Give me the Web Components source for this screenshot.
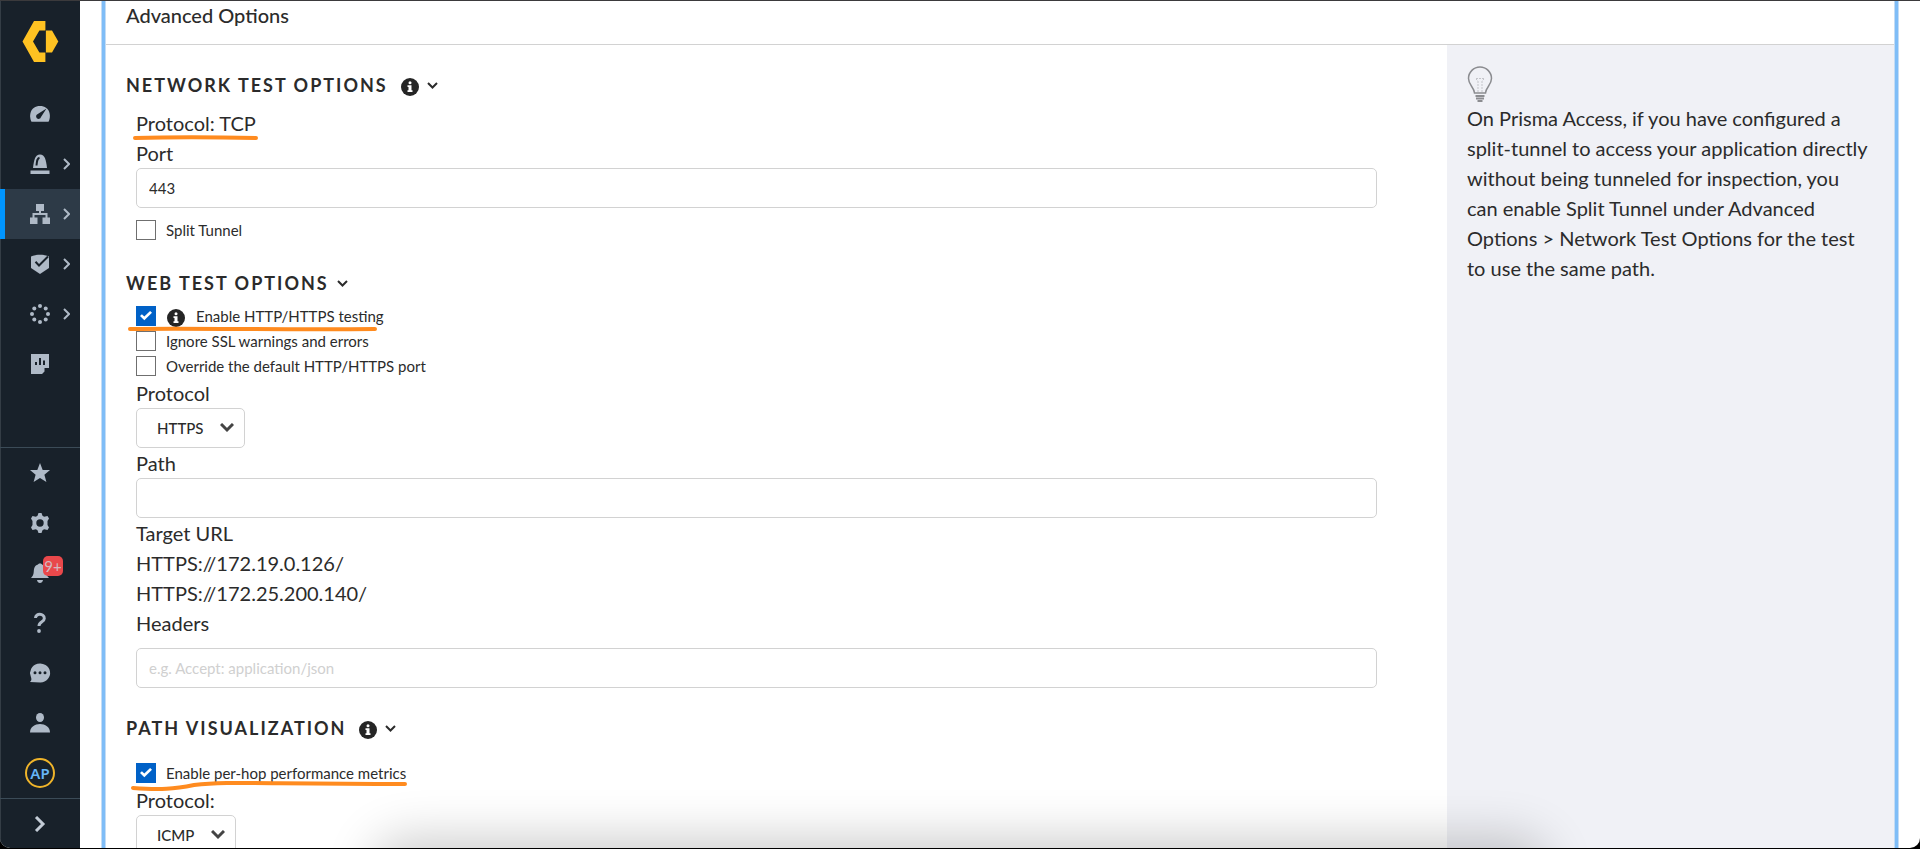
<!DOCTYPE html>
<html lang="en">
<head>
<meta charset="utf-8">
<title>Advanced Options</title>
<style>
  :root {
    --text: #2b2b2b;
    --rail: #18212a;
    --rail-active: #2d3a47;
    --icon: #afbac7;
    --line: #d2d2d2;
    --blue: #0061c7;
    --panel-edge: #7fbdf7;
    --panel-edge-soft: #c3dcf5;
    --mark: #ff8b1f;
  }
  html, body { height: 100%; }
  body {
    margin: 0;
    overflow: hidden;
    background: #fff;
    color: var(--text);
    font: 400 20px/30px Lato, "Liberation Sans", sans-serif;
  }
  check-row + check-row { margin-top: 5px; }
</style>
</head>
<body>

<app-window>
  <side-rail slot="rail">
    <rail-item icon="gauge" label="Dashboard"></rail-item>
    <rail-item icon="alarm" label="Alerts" more></rail-item>
    <rail-item icon="network" label="Network paths" more active></rail-item>
    <rail-item icon="shield" label="Policies" more></rail-item>
    <rail-item icon="dots" label="Experience" more></rail-item>
    <rail-item icon="report" label="Reports"></rail-item>
    <rail-item slot="bottom" icon="star" label="Favorites"></rail-item>
    <rail-item slot="bottom" icon="gear" label="Settings"></rail-item>
    <rail-item slot="bottom" icon="bell" label="Notifications" badge="9+"></rail-item>
    <rail-item slot="bottom" icon="help" label="Help"></rail-item>
    <rail-item slot="bottom" icon="chat" label="Chat"></rail-item>
    <rail-item slot="bottom" icon="person" label="Account"></rail-item>
    <rail-item slot="bottom" avatar="AP" label="Profile"></rail-item>
  </side-rail>

  <options-panel heading="Advanced Options">
    <option-section heading="Network Test Options" info>
      <text-line mark="M-1 30C30 29 80 29 120 30">Protocol: TCP</text-line>
      <text-field label="Port" value="443"></text-field>
      <check-row class="spaced" label="Split Tunnel"></check-row>
    </option-section>

    <option-section class="web" heading="Web Test Options">
      <check-row label="Enable HTTP/HTTPS testing" checked info mark="M-6 23C60 22 150 24 239 23"></check-row>
      <check-row label="Ignore SSL warnings and errors"></check-row>
      <check-row label="Override the default HTTP/HTTPS port"></check-row>
      <select-field label="Protocol" value="HTTPS"></select-field>
      <text-field label="Path"></text-field>
      <text-line>Target URL</text-line>
      <text-line>HTTPS://172.19.0.126/</text-line>
      <text-line>HTTPS://172.25.200.140/</text-line>
      <text-field class="roomy" label="Headers" placeholder="e.g. Accept: application/json"></text-field>
    </option-section>

    <option-section class="path" heading="Path Visualization" info>
      <check-row label="Enable per-hop performance metrics" checked mark="M-3 25C25 27 38 26 58 22C90 18 120 21 269 21"></check-row>
      <select-field label="Protocol:" value="ICMP"></select-field>
    </option-section>

    <hint-box slot="hint">On Prisma Access, if you have configured a split-tunnel to access your application directly without being tunneled for inspection, you can enable Split Tunnel under Advanced Options &gt; Network Test Options for the test to use the same path.</hint-box>
  </options-panel>
</app-window>

<script>
/* Icons on a 20x20 box, "cut" parts take the rail colour */
const icons = {
  gauge: `<path d="M1.500 17.800C-1.500 12 0 2 10 2S21.500 12 18.500 17.800Z"/><path class="cut" d="M16.500 4.500 11 13A2.500 2.500 0 1 1 7.800 10Z"/>`,
  alarm: `<path d="M3 14C4 6 5 .500 10 .500S16 6 17 14Z"/><path d="M.500 16.500h19v3.500H.500z"/><path class="cutline" d="M6.500 11.500C7 7 7 4.500 9.500 3.800"/>`,
  network: `<path d="M6 0h8v7H6zM0 13.500h7.500V20H0zM12.500 13.500H20V20h-7.500z"/><path class="line" d="M10 6v4M3.500 14v-4h13v4"/>`,
  shield: `<path d="M1 2.500C6 0 14 0 19 2.500V14L10 20 1 14Z"/><path class="cutline" d="M5.500 7.800 9 11.500 18 2.500"/>`,
  dots: `<circle cx="10" cy="2" r="2"/><circle cx="15.700" cy="4.500" r="2"/><circle cx="18" cy="10" r="2"/><circle cx="15.700" cy="15.500" r="2"/><circle cx="10" cy="18" r="2"/><circle cx="4.300" cy="15.500" r="2"/><circle cx="2" cy="10" r="2"/><circle cx="4.300" cy="4.500" r="2"/>`,
  report: `<path d="M1 0h18v14h-4.500v3.500L12 20H1z"/><path class="cut" d="M5 8h2v3H5zM9 4h2v7H9zM13 6.500h2V11h-2z"/>`,
  star: `<path d="m10 0 2.700 7H20l-5.600 4.700L16.400 19 10 15 3.600 19l2-7.300L0 7h7.300z"/>`,
  gear: `<path fill-rule="evenodd" d="M8.500 0h3l1 2.800 1.600.900L17.500 3 19 5.600 17.500 8v4l1.500 2.400-1.500 2.600-3.400-.700-1.600.900-1 2.800h-3l-1-2.800-1.600-.900-3.400.700L1 14.400 2.500 12V8L1 5.600 2.500 3l3.400.700 1.600-.900zM10 6.300a3.700 3.700 0 1 0 0 7.400 3.700 3.700 0 0 0 0-7.400z"/>`,
  bell: `<path d="M1 15C5 11 3 8 4.500 4.500 6 1.500 8 2 9 .500h2c1 1.500 3 1 4.500 4C17 8 15 11 19 15ZM7 17h6c-.500 4-5.500 4-6 0z"/>`,
  help: `<path class="line round" d="M5.500 5C5.500 0 14.300 0 14.300 5.400 14.300 9 9 8.500 9 13"/><circle cx="9" cy="18" r="1.900"/>`,
  chat: `<path d="M0 19C2 17 1.500 16 .800 13.500A10 9.500 0 1 1 10.500 19.500Z"/><path class="cutline round" d="M5 9.800h.01M10 9.800h.01M15 9.800h.01"/>`,
  person: `<ellipse cx="10" cy="4.500" rx="4" ry="4.500"/><path d="M0 19.500C0 8 20 8 20 19.500Z"/>`
};

const infoIcon = `<svg class="info" viewBox="0 0 18 18" width="18" height="18" aria-hidden="true">
  <circle cx="9" cy="9" r="9" fill="#252525"/>
  <circle cx="9" cy="4.700" r="1.500" fill="#fff"/>
  <path d="M6.500 7.300h4v5h1v1.600h-5v-1.600h1V9h-1z" fill="#fff"/>
</svg>`;

/* Hand drawn marker stroke under a row */
const markLine = (d) => d ? `<svg class="mark" width="1" height="1" aria-hidden="true"><path d="${d}"/></svg>` : "";
const markStyle = `
  .mark {
    position: absolute;
    left: 0;
    top: 0;
    overflow: visible;
    fill: none;
    stroke: var(--mark);
    stroke-width: 4px;
    stroke-linecap: round;
    pointer-events: none;
  }
`;

class BaseElement extends HTMLElement {
  constructor() {
    super();
    this.attachShadow({ mode: "open" });
  }

  connectedCallback() {
    this.shadowRoot.innerHTML = `<style>* { box-sizing: border-box; }${this.styles()}</style>${this.markup()}`;
  }

  attr(name) {
    return this.getAttribute(name) || "";
  }
}

class AppWindow extends BaseElement {
  styles() {
    return `
      :host { display: block; height: 100vh; background: #000; }
      .frame {
        position: relative;
        display: flex;
        height: calc(100vh - 1px);
        overflow: hidden;
        background: #fff;
        border-top: 1px solid #3b3a3c;
        border-radius: 0 0 10px 10px;
      }
      /* shade cast by the dock below the window */
      .shade {
        position: absolute;
        left: 20%;
        right: 20%;
        top: 100%;
        height: 60px;
        border-radius: 20px;
        box-shadow: 0 0 50px 10px rgba(0, 0, 0, .2);
        pointer-events: none;
      }
    `;
  }
  markup() {
    return `<div class="frame"><slot name="rail"></slot><slot></slot><div class="shade"></div></div>`;
  }
}

class SideRail extends BaseElement {
  styles() {
    return `
      :host {
        display: flex;
        flex: none;
        flex-direction: column;
        width: 80px;
        background: var(--rail);
        box-shadow: inset 1px 0 0 #343d45;
      }
      .logo { display: block; height: 88px; padding: 20px 0 0 22px; }
      nav { display: flex; flex-direction: column; }
      .bottom { margin-top: auto; border-top: 1px solid #3b4b57; }
      .expand {
        display: flex;
        align-items: center;
        justify-content: center;
        height: 50px;
        padding: 0;
        background: none;
        border: 0;
        border-top: 1px solid #3b4b57;
        cursor: pointer;
      }
    `;
  }
  markup() {
    return `
      <a class="logo" href="#" aria-label="Home">
        <svg width="37" height="41" viewBox="0 0 37 41" fill="#ffc222">
          <path d="M12 0h11.400v9.500h-6L11 20.500l6.400 11h6V41H12L.500 20.500z"/>
          <path d="M23.900 9.500H30l6.300 11-6.300 11h-6.100z"/>
        </svg>
      </a>
      <nav><slot></slot></nav>
      <nav class="bottom"><slot name="bottom"></slot></nav>
      <button class="expand" aria-label="Expand menu">
        <svg width="12" height="16" viewBox="0 0 12 16" fill="none" stroke="#c3ccd6" stroke-width="3"><path d="m2 1 7 7-7 7"/></svg>
      </button>
    `;
  }
}

class RailItem extends BaseElement {
  styles() {
    return `
      :host { display: block; }
      a {
        position: relative;
        display: flex;
        align-items: center;
        justify-content: center;
        height: 50px;
        text-decoration: none;
      }
      :host([active]) a { background: var(--rail-active); box-shadow: inset 5px 0 0 #0095ff; }
      .icon { fill: var(--icon); overflow: visible; }
      .cut { fill: var(--rail); }
      .line, .cutline { fill: none; stroke: var(--icon); stroke-width: 2px; }
      .line.round { stroke-width: 3px; }
      .cutline { stroke: var(--rail); }
      .cutline.round { stroke-width: 3px; stroke-linecap: round; }
      .more { position: absolute; right: 10px; }
      .badge {
        position: absolute;
        left: 43px;
        top: 8px;
        width: 20px;
        height: 20px;
        border-radius: 5px;
        background: #e9484b;
        color: #d3b9c0;
        font-size: 15px;
        line-height: 20px;
        text-align: center;
      }
      .avatar {
        width: 30px;
        height: 30px;
        border: 2px solid #efb42a;
        border-radius: 50%;
        color: #66b5f7;
        font-family: "Noto Sans", sans-serif;
        font-size: 15px;
        font-weight: 600;
        line-height: 26px;
        text-align: center;
      }
    `;
  }
  markup() {
    const body = this.attr("avatar")
      ? `<span class="avatar">${this.attr("avatar")}</span>`
      : `<svg class="icon" width="20" height="20" viewBox="0 0 20 20">${icons[this.attr("icon")]}</svg>`;
    const more = this.hasAttribute("more")
      ? `<svg class="more" width="7" height="12" viewBox="0 0 7 12" fill="none" stroke="#afbac7" stroke-width="2"><path d="m1 1 5 5-5 5"/></svg>`
      : "";
    const badge = this.attr("badge") ? `<span class="badge">${this.attr("badge")}</span>` : "";
    return `<a href="#" aria-label="${this.attr("label")}">${body}${more}${badge}</a>`;
  }
}

class OptionsPanel extends BaseElement {
  styles() {
    return `
      :host {
        display: flex;
        flex: 1;
        flex-direction: column;
        min-width: 0;
        margin: 0 21px;
        padding: 0 5px;
        background: linear-gradient(90deg,
          var(--panel-edge-soft) 1px,
          var(--panel-edge) 1px 4px,
          var(--panel-edge-soft) 4px 5px,
          #fff 5px calc(100% - 5px),
          var(--panel-edge-soft) calc(100% - 5px) calc(100% - 4px),
          var(--panel-edge) calc(100% - 4px) calc(100% - 1px),
          var(--panel-edge-soft) calc(100% - 1px));
      }
      h2 {
        flex: none;
        height: 44px;
        margin: 0;
        padding: 0 20px;
        border-bottom: 1px solid var(--line);
        font-size: 20px;
        font-weight: 500;
        line-height: 28px;
      }
      .columns { display: grid; grid-template-columns: 3fr 1fr; flex: 1; min-height: 0; }
      main { min-width: 0; min-height: 0; padding: 25px 70px 0 20px; }
      aside { min-width: 0; background: #f0f1f6; }
    `;
  }
  markup() {
    return `
      <h2>${this.attr("heading")}</h2>
      <div class="columns">
        <main><slot></slot></main>
        <aside><slot name="hint"></slot></aside>
      </div>
    `;
  }
}

class OptionSection extends BaseElement {
  styles() {
    return `
      :host { display: block; margin-bottom: 28px; }
      :host(.web) { margin-bottom: 25px; }
      h3 {
        display: flex;
        align-items: center;
        height: 30px;
        margin: 0 0 8px;
        font-size: 18px;
        font-weight: 700;
        letter-spacing: 2px;
        text-transform: uppercase;
      }
      :host(.path) h3 { margin-bottom: 20px; }
      .info { margin: 4px 0 0 13px; }
      button { display: flex; margin: 0 0 0 6px; padding: 2px; border: 0; background: none; cursor: pointer; }
      .body { padding-left: 10px; }
    `;
  }
  markup() {
    return `
      <h3>${this.attr("heading")}${this.hasAttribute("info") ? infoIcon : ""}
        <button aria-label="Collapse section">
          <svg width="11" height="7" viewBox="0 0 11 7" fill="none" stroke="#2b2b2b" stroke-width="2"><path d="m1 1 4.500 4.500L10 1"/></svg>
        </button>
      </h3>
      <div class="body"><slot></slot></div>
    `;
  }
}

class TextLine extends BaseElement {
  styles() {
    return `:host { display: block; position: relative; }${markStyle}`;
  }
  markup() {
    return `<slot></slot>${markLine(this.attr("mark"))}`;
  }
}

class TextField extends BaseElement {
  styles() {
    return `
      :host { display: block; }
      label { display: block; }
      :host(.roomy) label { margin-bottom: 10px; }
      input {
        display: block;
        width: 100%;
        height: 40px;
        padding: 0 12px;
        border: 1px solid var(--line);
        border-radius: 5px;
        background: #fff;
        color: var(--text);
        font-family: inherit;
        font-size: 15px;
      }
      input::placeholder { color: #d0d0d0; opacity: 1; }
    `;
  }
  markup() {
    return `
      <label for="field">${this.attr("label")}</label>
      <input id="field" type="text" value="${this.attr("value")}" placeholder="${this.attr("placeholder")}">
    `;
  }
}

class SelectField extends BaseElement {
  styles() {
    return `
      :host { display: block; margin-top: 2px; }
      label { display: block; }
      .box { position: relative; display: flex; width: max-content; }
      select {
        appearance: none;
        height: 40px;
        padding: 0 40px 0 20px;
        border: 1px solid var(--line);
        border-radius: 5px;
        background: #fff;
        color: var(--text);
        font-family: inherit;
        font-size: 15px;
        font-weight: 500;
      }
      svg { position: absolute; right: 11px; top: 15px; pointer-events: none; }
    `;
  }
  markup() {
    return `
      <label for="field">${this.attr("label")}</label>
      <div class="box">
        <select id="field"><option>${this.attr("value")}</option></select>
        <svg width="14" height="10" viewBox="0 0 14 10" fill="none" stroke="#444" stroke-width="3"><path d="m1 1 6 6 6-6"/></svg>
      </div>
    `;
  }
}

class CheckRow extends BaseElement {
  styles() {
    return `
      :host { display: flex; position: relative; align-items: center; height: 20px; }
      :host(.spaced) { margin-top: 12px; }
      input {
        appearance: none;
        display: grid;
        place-items: center;
        flex: none;
        width: 20px;
        height: 20px;
        margin: 0 10px 0 0;
        border: 1px solid #6f6f6f;
        background: #fff;
      }
      input:checked { border-color: var(--blue); background: var(--blue); }
      input:checked::before {
        content: "";
        width: 12px;
        height: 10px;
        background: #fff;
        clip-path: polygon(0 50%, 16% 32%, 36% 55%, 84% 0, 100% 18%, 36% 92%);
      }
      label { display: flex; align-items: center; font-size: 15px; line-height: 20px; }
      .info { margin: 4px 11px 0 1px; }
      ${markStyle}
    `;
  }
  markup() {
    return `
      <input id="check" type="checkbox" ${this.hasAttribute("checked") ? "checked" : ""}>
      <label for="check">${this.hasAttribute("info") ? infoIcon : ""}${this.attr("label")}</label>
      ${markLine(this.attr("mark"))}
    `;
  }
}

class HintBox extends BaseElement {
  styles() {
    return `
      :host { display: block; padding: 21px 20px 0; }
      svg { display: block; margin-bottom: 1px; }
      p { margin: 0; }
    `;
  }
  markup() {
    return `
      <svg width="26" height="36" viewBox="0 0 26 36" fill="none" stroke="#8b8c90" stroke-width="1.500" aria-hidden="true">
        <path d="M7.500 27C7 21 1.500 19 1.500 12.500a11.500 11.500 0 0 1 23 0C24.500 19 19 21 18.500 27Z"/>
        <path d="M8.500 30h9M9 32.500h8M10.500 35h5" stroke-width="1.800"/>
        <path d="M11 26V15l-2-2M15 26V15l2-2M9 12.500h8" stroke="#c4c5ca" stroke-width="1" stroke-dasharray="2 1"/>
      </svg>
      <p><slot></slot></p>
    `;
  }
}

customElements.define("app-window", AppWindow);
customElements.define("side-rail", SideRail);
customElements.define("rail-item", RailItem);
customElements.define("options-panel", OptionsPanel);
customElements.define("option-section", OptionSection);
customElements.define("text-line", TextLine);
customElements.define("text-field", TextField);
customElements.define("select-field", SelectField);
customElements.define("check-row", CheckRow);
customElements.define("hint-box", HintBox);
</script>
</body>
</html>
